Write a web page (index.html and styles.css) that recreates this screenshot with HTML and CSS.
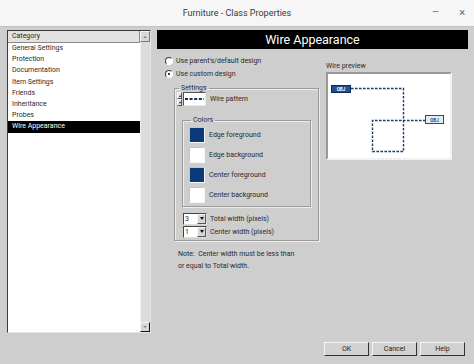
FILE: index.html
```html
<!DOCTYPE html>
<html>

<head>
    <title>Furniture - Class Properties</title>
    <link rel="stylesheet" href="styles.css">
</head>

<body>
    <div class="titlebar">
        <span class="title">Furniture - Class Properties</span>
        <span class="wm-btn">&#8212;</span>
        <span class="wm-btn close">&#215;</span>
    </div>

    <div class="dialog">
        <div class="content">
            <!-- Category list -->
            <div class="listbox">
                <div class="list">
                    <div class="list-head">Category</div>
                    <ul class="items">
                        <li>General Settings</li>
                        <li>Protection</li>
                        <li>Documentation</li>
                        <li>Item Settings</li>
                        <li>Friends</li>
                        <li>Inheritance</li>
                        <li>Probes</li>
                        <li class="selected">Wire Appearance</li>
                    </ul>
                </div>
                <div class="scrollbar">
                    <div class="sb-btn up"></div>
                    <div class="sb-track"></div>
                    <div class="sb-btn down"></div>
                </div>
            </div>

            <!-- Page -->
            <div class="page">
                <div class="page-title">Wire Appearance</div>
                <div class="page-body">
                    <div class="left-col">
                        <label class="radio-row"><span class="radio"></span>Use parent's/default design</label>
                        <label class="radio-row"><span class="radio checked"></span>Use custom design</label>

                        <fieldset class="group settings">
                            <legend>Settings</legend>
                            <div class="pattern-row">
                                <div class="spinner">
                                    <span class="spin up"></span>
                                    <span class="spin down"></span>
                                </div>
                                <div class="pattern-box">
                                    <svg width="21" height="12" viewBox="0 0 21 12">
                                        <line x1="1" y1="6" x2="20" y2="6" stroke="#13305e" stroke-width="2" stroke-dasharray="3 1.6" />
                                    </svg>
                                </div>
                                <span class="row-label">Wire pattern</span>
                            </div>

                            <fieldset class="group colors">
                                <legend>Colors</legend>
                                <div class="color-row"><span class="swatch blue"></span>Edge foreground</div>
                                <div class="color-row"><span class="swatch"></span>Edge background</div>
                                <div class="color-row"><span class="swatch blue"></span>Center foreground</div>
                                <div class="color-row"><span class="swatch"></span>Center background</div>
                            </fieldset>

                            <div class="combo-row first">
                                <div class="combo"><span class="combo-val">3</span><span class="combo-btn"></span></div>
                                <span>Total width (pixels)</span>
                            </div>
                            <div class="combo-row">
                                <div class="combo"><span class="combo-val">1</span><span class="combo-btn"></span></div>
                                <span>Center width (pixels)</span>
                            </div>
                        </fieldset>

                        <p class="note">Note:&nbsp; Center width must be less than<br>or equal to Total width.</p>
                    </div>

                    <div class="preview">
                        <div class="preview-label">Wire preview</div>
                        <div class="preview-box">
                            <svg width="122" height="84" viewBox="0 0 122 84">
                                <g fill="none" stroke="#1d3b6b" stroke-width="1.4" stroke-dasharray="2.6 1.4">
                                    <path d="M23 14.5 H75.5 V77.5 H44.5 V46.5 H97" />
                                </g>
                                <rect x="3.5" y="11.5" width="19" height="7" fill="#234f8c" stroke="#0d2a55" />
                                <text x="13" y="17" class="obj-text" fill="#fff">OBJ</text>
                                <rect x="97.5" y="41.5" width="18" height="8" fill="#e3ebf5" stroke="#234f8c" />
                                <text x="106.5" y="47.5" class="obj-text" fill="#234f8c">OBJ</text>
                            </svg>
                        </div>
                    </div>
                </div>
            </div>
        </div>

        <div class="buttons">
            <button class="btn">OK</button>
            <button class="btn">Cancel</button>
            <button class="btn">Help</button>
        </div>
    </div>
</body>

</html>
```

FILE: styles.css
```css
body {
    font-family: Roboto, "Noto Sans", sans-serif;
    font-size: 7px;
    margin: 0;
    padding: 0;
    background-color: #cecece;
    color: #2a2a2a;
    width: 474px;
    height: 364px;
    overflow: hidden;
}

/* Window title bar */
.titlebar {
    height: 26px;
    background-color: #f6f6f6;
    border-bottom: 1px solid #c4c4c4;
    display: flex;
    align-items: center;
    position: relative;
    justify-content: center;
}

.title {
    font-size: 9px;
    color: #3a3a3a;
}

.wm-btn {
    position: absolute;
    top: 7px;
    right: 35px;
    font-size: 9px;
    color: #666;
}

.wm-btn.close {
    right: 9px;
    font-size: 11px;
    top: 6px;
}

.dialog {
    padding: 3px 6px 0 7px;
}

.content {
    display: flex;
    gap: 6px;
}

/* Category list */
.listbox {
    width: 142px;
    height: 301px;
    display: flex;
    border: 1px solid;
    border-color: #3a3a3a #e6e6e6 #e6e6e6 #3a3a3a;
    background-color: #fff;
}

.list {
    flex: 1;
}

.list-head {
    height: 11px;
    line-height: 11px;
    padding-left: 4px;
    background-color: #e2e2e2;
    border-bottom: 1px solid #8a8a8a;
    border-right: 1px solid #8a8a8a;
}

.items {
    list-style: none;
    margin: 0;
    padding: 0;
}

.items li {
    height: 11.2px;
    line-height: 11.2px;
    padding-left: 4px;
}

.items li.selected {
    background-color: #000;
    color: #fff;
}

.scrollbar {
    width: 10px;
    display: flex;
    flex-direction: column;
    background-color: #dcdcdc;
}

.sb-track {
    flex: 1;
    border-left: 1px solid #f0f0f0;
}

.sb-btn {
    height: 11px;
    background-color: #d8d8d8;
    border: 1px solid;
    border-color: #f4f4f4 #7a7a7a #7a7a7a #f4f4f4;
    box-sizing: border-box;
    display: flex;
    align-items: center;
    justify-content: center;
}

.sb-btn.down {
    height: 10px;
    border-color: #f4f4f4 #111 #111 #f4f4f4;
}

.sb-btn::after {
    content: "";
    border-left: 2px solid transparent;
    border-right: 2px solid transparent;
}

.sb-btn.up::after {
    border-bottom: 2px solid #888;
}

.sb-btn.down::after {
    border-top: 2px solid #888;
}

/* Page */
.page {
    width: 311px;
}

.page-title {
    height: 19px;
    line-height: 19px;
    background-color: #000;
    color: #fff;
    text-align: center;
    font-size: 12.5px;
}

.page-body {
    display: flex;
}

.left-col {
    width: 169px;
    padding-top: 5px;
}

.radio-row {
    display: flex;
    align-items: center;
    height: 13px;
    padding-left: 8px;
}

.radio {
    width: 6px;
    height: 6px;
    border-radius: 50%;
    border: 1px solid;
    border-color: #3c3c3c #fff #fff #3c3c3c;
    background-color: #fff;
    margin-right: 3px;
    display: flex;
    align-items: center;
    justify-content: center;
}

.radio.checked::after {
    content: "";
    width: 2px;
    height: 2px;
    border-radius: 50%;
    background-color: #000;
}

/* Group boxes */
.group {
    margin: 0;
    border: 1px solid #9c9c9c;
    box-shadow: inset 1px 1px 0 #ececec, 1px 1px 0 #ececec;
    min-width: 0;
}

.group legend {
    padding: 0 2px;
    margin-left: 2px;
    line-height: 11px;
}

.settings {
    margin: 3px 0 0 17px;
    width: 145px;
    box-sizing: border-box;
    padding: 0 2px 2px 2px;
}

.pattern-row {
    display: flex;
    align-items: center;
    height: 14px;
    margin-top: -2px;
}

.spinner {
    width: 5px;
    height: 14px;
    display: flex;
    flex-direction: column;
    margin-right: 1px;
}

.spin {
    flex: 1;
    background-color: #e4e4e4;
    border: 1px solid;
    border-color: #fafafa #555 #555 #fafafa;
    display: flex;
    align-items: center;
    justify-content: center;
}

.spin::after {
    content: "";
    border-left: 1.5px solid transparent;
    border-right: 1.5px solid transparent;
}

.spin.up::after {
    border-bottom: 2px solid #222;
}

.spin.down::after {
    border-top: 2px solid #222;
}

.pattern-box {
    width: 23px;
    height: 14px;
    box-sizing: border-box;
    background-color: #fff;
    border: 1px solid;
    border-color: #555 #e8e8e8 #e8e8e8 #555;
    display: flex;
    align-items: center;
    justify-content: center;
}

.row-label {
    margin-left: 4px;
}

.colors {
    margin: 9px 0 0 5px;
    width: 129px;
    box-sizing: border-box;
    padding: 1px 6px 3px 6px;
}

.color-row {
    display: flex;
    align-items: center;
    height: 16px;
    margin-bottom: 4px;
}

.color-row:last-child {
    margin-bottom: 0;
}

.swatch {
    width: 16px;
    height: 16px;
    box-sizing: border-box;
    background-color: #fff;
    border: 1px solid;
    border-color: #c4c4c4 #f8f8f8 #f8f8f8 #c4c4c4;
    margin-right: 4px;
}

.swatch.blue {
    background-color: #0c3a78;
}

.combo-row {
    display: flex;
    align-items: center;
    height: 13px;
    margin-left: 6px;
}

.combo-row.first {
    margin-top: 5px;
}

.combo {
    width: 24px;
    height: 12px;
    box-sizing: border-box;
    display: flex;
    background-color: #fff;
    border: 1px solid;
    border-color: #444 #ddd #ddd #444;
    margin-right: 3px;
}

.combo-val {
    flex: 1;
    padding-left: 1px;
    line-height: 10px;
}

.combo-btn {
    width: 9px;
    background-color: #d6d6d6;
    border: 1px solid;
    border-color: #f6f6f6 #555 #555 #f6f6f6;
    box-sizing: border-box;
    display: flex;
    align-items: center;
    justify-content: center;
}

.combo-btn::after {
    content: "";
    border-left: 2.5px solid transparent;
    border-right: 2.5px solid transparent;
    border-top: 3px solid #111;
}

.note {
    margin: 7px 0 0 21px;
    line-height: 12px;
}

/* Wire preview */
.preview {
    padding-top: 12px;
}

.preview-label {
    line-height: 10px;
    margin-bottom: 1px;
}

.preview-box {
    width: 122px;
    height: 84px;
    background-color: #fff;
    border: 2px solid;
    border-color: #9a9a9a #f2f2f2 #f2f2f2 #9a9a9a;
}

.preview-box svg {
    display: block;
}

.obj-text {
    font-size: 4.5px;
    font-weight: bold;
    text-anchor: middle;
}

/* Buttons */
.buttons {
    display: flex;
    justify-content: flex-end;
    gap: 3px;
    margin-top: 9px;
    padding-right: 3px;
}

.btn {
    width: 45px;
    height: 14px;
    font-family: inherit;
    font-size: 7px;
    color: #222;
    background-color: #d2d2d2;
    border: 1px solid;
    border-color: #f6f6f6 #333 #333 #f6f6f6;
    padding: 0;
}
```
